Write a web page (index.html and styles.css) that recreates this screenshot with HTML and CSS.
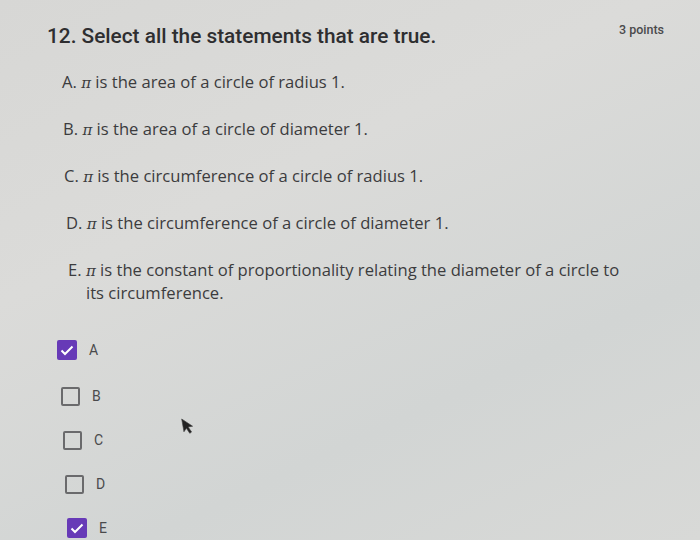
FILE: index.html
```html
<!DOCTYPE html>
<html>
<head>
<meta charset="utf-8">
<link rel="stylesheet" href="styles.css">
</head>
<body>
<div class="page">
  <div class="header">
    <div class="title">12. Select all the statements that are true.</div>
    <div class="points">3 points</div>
  </div>
  <div class="statements">
    <div class="st s1">A. <i>π</i> is the area of a circle of radius 1.</div>
    <div class="st s2">B. <i>π</i> is the area of a circle of diameter 1.</div>
    <div class="st s3">C. <i>π</i> is the circumference of a circle of radius 1.</div>
    <div class="st s4">D. <i>π</i> is the circumference of a circle of diameter 1.</div>
    <div class="st s5">E. <i>π</i> is the constant of proportionality relating the diameter of a circle to<br><span class="indent">its circumference.</span></div>
  </div>
  <div class="choices">
    <div class="choice c1"><span class="box checked"><svg viewBox="0 0 20 20" width="20" height="20"><path d="M4.5 10.5l3.5 3.5 7.5-7.5" fill="none" stroke="#fff" stroke-width="2"/></svg></span><span class="lbl">A</span></div>
    <div class="choice c2"><span class="box"></span><span class="lbl">B</span></div>
    <div class="choice c3"><span class="box"></span><span class="lbl">C</span></div>
    <div class="choice c4"><span class="box"></span><span class="lbl">D</span></div>
    <div class="choice c5"><span class="box checked"><svg viewBox="0 0 20 20" width="20" height="20"><path d="M4.5 10.5l3.5 3.5 7.5-7.5" fill="none" stroke="#fff" stroke-width="2"/></svg></span><span class="lbl">E</span></div>
  </div>
  <svg class="cursor" viewBox="0 0 12 18" width="12" height="18"><path d="M1 1 L1 14 L4 11 L6.5 16.5 L8.5 15.5 L6 10 L10.5 10 Z" fill="#222" stroke="#444" stroke-width="0.6"/></svg>
</div>
</body>
</html>
```
FILE: styles.css
```css
html, body {
  margin: 0;
  padding: 0;
}
body {
  width: 700px;
  height: 540px;
  overflow: hidden;
  background: linear-gradient(155deg, #d7d7d5 0%, #dbdbd9 35%, #d2d5d4 70%, #d8d9d7 100%);
  color: #3a3a3c;
}
.page {
  position: relative;
  width: 700px;
  height: 540px;
}
.header {
  display: flex;
  justify-content: space-between;
  align-items: flex-start;
  padding: 22px 36px 0 47px;
}
.title {
  font-family: Roboto, "Liberation Sans", sans-serif;
  font-weight: 500;
  font-size: 20.8px;
  line-height: 28px;
  color: #2e2e30;
}
.points {
  font-family: Roboto, "Liberation Sans", sans-serif;
  font-weight: 500;
  font-size: 12.5px;
  color: #4a4a4c;
  margin-top: 0;
}
.statements {
  font-family: "Open Sans", "Liberation Sans", sans-serif;
  font-size: 16.6px;
  color: #3c3c3e;
  padding-top: 20px;
}
.st {
  line-height: 23px;
  height: 23px;
  margin-bottom: 24px;
  white-space: nowrap;
}
.st i {
  font-family: "DejaVu Serif", serif;
  font-style: italic;
  font-size: 15px;
  line-height: 1;
}
.s1 { padding-left: 62px; }
.s2 { padding-left: 63px; }
.s3 { padding-left: 64px; }
.s4 { padding-left: 66px; }
.s5 { padding-left: 68px; margin-bottom: 0; height: 46px; }
.indent { padding-left: 18px; }
.choices {
  padding-top: 36px;
  font-family: Roboto, "Liberation Sans", sans-serif;
  font-size: 14px;
  color: #4a4a4c;
}
.choice {
  display: flex;
  align-items: center;
  height: 20px;
  margin-bottom: 24px;
}
.c1 { padding-left: 57px; margin-bottom: 26px; }
.c2 { padding-left: 61px; }
.c3 { padding-left: 63px; }
.c4 { padding-left: 65px; }
.c5 { padding-left: 67px; }
.box {
  width: 15px;
  height: 15px;
  border: 2px solid #6a6a6c;
  border-radius: 2px;
  display: inline-flex;
  align-items: center;
  justify-content: center;
  box-sizing: content-box;
}
.box.checked {
  width: 20px;
  height: 20px;
  border: none;
  background: #673ab7;
}
.lbl {
  margin-left: 12px;
}
.cursor {
  position: absolute;
  left: 182px;
  top: 417px;
  transform: rotate(-10deg);
}
```
